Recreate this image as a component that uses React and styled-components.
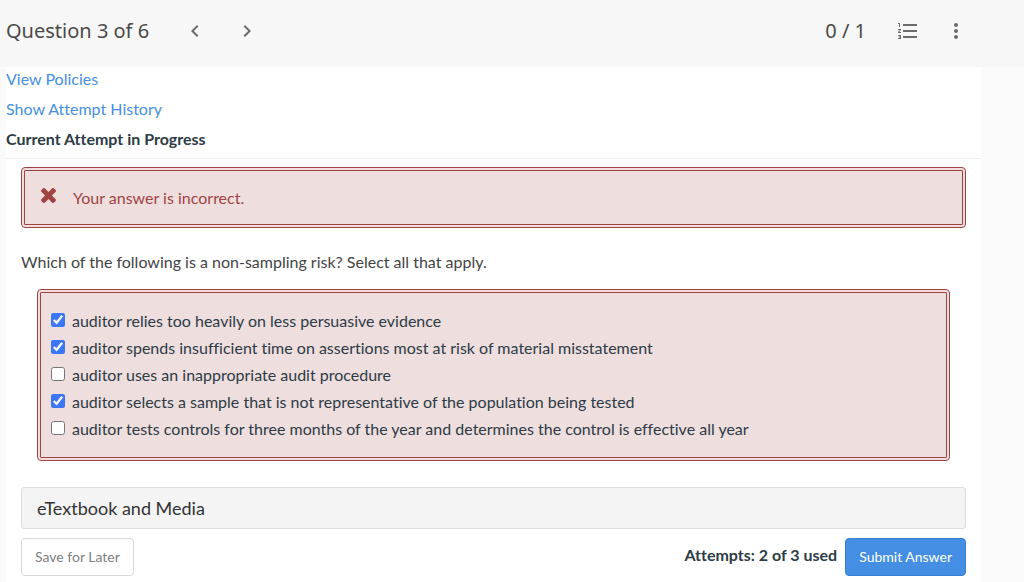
import React, { useState } from 'react'
import styled, { createGlobalStyle } from 'styled-components'
import {
    MdChevronLeft,
    MdChevronRight,
    MdFormatListNumbered,
    MdMoreVert,
} from 'react-icons/md'

const choices = [
    { id: 'evidence', text: 'auditor relies too heavily on less persuasive evidence', checked: true },
    { id: 'time', text: 'auditor spends insufficient time on assertions most at risk of material misstatement', checked: true },
    { id: 'procedure', text: 'auditor uses an inappropriate audit procedure', checked: false },
    { id: 'sample', text: 'auditor selects a sample that is not representative of the population being tested', checked: true },
    { id: 'controls', text: 'auditor tests controls for three months of the year and determines the control is effective all year', checked: false },
]

const App = () => {
    const [selected, setSelected] = useState(
        choices.filter((choice) => choice.checked).map((choice) => choice.id)
    )
    const toggle = (id) => {
        setSelected(
            selected.includes(id)
                ? selected.filter((item) => item !== id)
                : [...selected, id]
        )
    }
    return <>
        <GlobalStyle />
        <Header>
            <Title>Question 3 of 6</Title>
            <Pager>
                <IconButton aria-label="Previous question"><MdChevronLeft /></IconButton>
                <IconButton aria-label="Next question"><MdChevronRight /></IconButton>
            </Pager>
            <Score>0 / 1</Score>
            <Actions>
                <IconButton aria-label="Question list"><MdFormatListNumbered /></IconButton>
                <IconButton aria-label="More options"><MdMoreVert /></IconButton>
            </Actions>
        </Header>
        <Content>
            <Intro>
                <TextLink href="#policies">View Policies</TextLink>
                <TextLink href="#history">Show Attempt History</TextLink>
                <Status>Current Attempt in Progress</Status>
            </Intro>
            <Body>
                <Alert role="alert">
                    <CrossIcon />
                    Your answer is incorrect.
                </Alert>
                <Prompt id="prompt">Which of the following is a non-sampling risk? Select all that apply.</Prompt>
                <Choices aria-labelledby="prompt" role="group">
                    {choices.map(({ id, text }) => (
                        <Choice key={id} htmlFor={id}>
                            <input
                                type="checkbox"
                                id={id}
                                checked={selected.includes(id)}
                                onChange={() => toggle(id)}
                            />
                            {text}
                        </Choice>
                    ))}
                </Choices>
                <MediaButton>eTextbook and Media</MediaButton>
                <Footer>
                    <Button>Save for Later</Button>
                    <Attempts>Attempts: 2 of 3 used</Attempts>
                    <Button $primary>Submit Answer</Button>
                </Footer>
            </Body>
        </Content>
    </>
}

const CrossIcon = () => (
    <svg width="15" height="15" viewBox="110 366 1188 1188" fill="currentColor" aria-hidden="true">
        <path d="M1298 1322q0 40-28 68l-136 136q-28 28-68 28t-68-28L704 1232 410 1526q-28 28-68 28t-68-28L138 1390q-28-28-28-68t28-68l294-294L138 666q-28-28-28-68t28-68l136-136q28-28 68-28t68 28l294 294 294-294q28-28 68-28t68 28l136 136q28 28 28 68t-28 68L976 960l294 294q28 28 28 68z" />
    </svg>
)

const GlobalStyle = createGlobalStyle`
    * {
        box-sizing: border-box;
    }
    body {
        margin: 0;
        background: #fafafa;
        color: #2d3b45;
        font-family: Lato, sans-serif;
        font-size: 16px;
        line-height: 24px;
        font-variant-ligatures: none;
    }
    button {
        font-family: inherit;
        font-variant-ligatures: inherit;
        cursor: pointer;
    }
`
const Header = styled.header`
    display: flex;
    align-items: center;
    padding: 16px 56px 21px 6px;
    min-height: 67px;
    background: #f7f7f7;
    color: #4a4a4a;
    font-family: 'Noto Sans', sans-serif;
    font-size: 20px;
    line-height: 30px;
`
const Title = styled.h1`
    margin: 0;
    font-size: inherit;
    font-weight: 400;
`
const Pager = styled.nav`
    display: flex;
    gap: 28px;
    margin-left: 34px;
`
const Score = styled.span`
    margin-left: auto;
`
const Actions = styled.div`
    display: flex;
    gap: 24px;
    margin-left: 30px;
`
const IconButton = styled.button`
    display: flex;
    padding: 0;
    border: 0;
    background: none;
    color: #6b6b6b;
    font-size: 24px;
    line-height: 24px;
`
const Content = styled.main`
    margin: 0 43px 0 6px;
    background: #fff;
`
const Intro = styled.div`
    display: flex;
    flex-direction: column;
    align-items: flex-start;
    gap: 6px;
    padding-bottom: 7px;
    border-bottom: 1px solid #eee;
`
const TextLink = styled.a`
    color: #458fe3;
    text-decoration: none;
`
const Status = styled.strong`
    font-weight: 700;
`
const Body = styled.div`
    padding: 8px 15px 6px;
`
const Alert = styled.div`
    display: flex;
    align-items: center;
    gap: 17px;
    padding: 15px 16px 14px;
    border: 4px double #a04443;
    border-radius: 4px;
    background: #eedede;
    color: #a04443;
    svg {
        margin-bottom: 5px;
    }
`
const Prompt = styled.p`
    margin: 22px 0 15px;
    color: #444;
`
const Choices = styled.div`
    display: flex;
    flex-direction: column;
    margin: 0 16px;
    padding: 14px 10px 15px;
    border: 4px double #a04443;
    border-radius: 4px;
    background: #eedede;
`
const Choice = styled.label`
    display: flex;
    align-items: center;
    gap: 7px;
    line-height: 27px;
    input {
        width: 14px;
        height: 14px;
        margin: 0 0 2px;
        accent-color: #3b76f6;
    }
`
const MediaButton = styled.button`
    display: block;
    width: 100%;
    margin: 26px 0 9px;
    padding: 8px 15px;
    border: 1px solid #ddd;
    border-radius: 3px;
    background: #f4f4f4;
    color: #333;
    font-size: 18px;
    line-height: 24px;
    text-align: left;
`
const Footer = styled.div`
    display: flex;
    align-items: center;
`
const Attempts = styled.strong`
    margin: 0 8px 4px auto;
`
const Button = styled.button`
    padding: 6px 13px;
    border: 1px solid ${({ $primary }) => ($primary ? '#3580d2' : '#d9d9d9')};
    border-radius: 4px;
    background: ${({ $primary }) => ($primary ? '#448fe3' : '#fff')};
    color: ${({ $primary }) => ($primary ? '#fff' : '#808080')};
    font-size: 14px;
    line-height: 24px;
`
export default App
